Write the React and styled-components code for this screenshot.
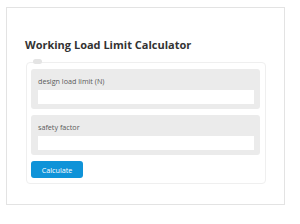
import React from 'react';
import styled, { createGlobalStyle } from 'styled-components';

const GlobalStyle = createGlobalStyle`
body {
	margin: 0;
	background: #fff;
	font-family: 'Open Sans', 'Liberation Sans', sans-serif;
}
`;

const Page = styled.div`
box-sizing: border-box;
width: 279px;
height: 198px;
margin: 7px 0 0 6px;
padding: 29px 18px 0 19px;
border: 1px solid #e3e3e3;
`;

const Title = styled.h1`
margin: 0 0 9px -1px;
font-size: 11px;
line-height: 16px;
font-weight: 700;
color: #333;
`;

const Card = styled.form`
position: relative;
display: flex;
flex-flow: column nowrap;
gap: 6px;
padding: 6px 5px 5px 4px;
border: 1px solid #efefef;
border-radius: 4px;
`;

const Legend = styled.span`
position: absolute;
left: 6px;
top: -4px;
width: 9px;
height: 5px;
border-radius: 3px;
background: #e4e4e4;
`;

const Field = styled.div`
display: flex;
flex-flow: column nowrap;
padding: 7px 6px 5px 7px;
background: #ebebeb;
border-radius: 3px;
`;

const Label = styled.label`
font-size: 7.2px;
line-height: 10px;
color: #5a5a5a;
margin-bottom: 4px;
`;

const Input = styled.input`
box-sizing: border-box;
height: 14px;
border: none;
outline: none;
background: #fff;
padding: 0 4px;
font-size: 7px;
`;

const Button = styled.button`
align-self: flex-start;
width: 52px;
height: 17px;
padding: 0;
border: none;
border-radius: 3px;
background: #0f93d8;
color: #fff;
font-family: 'Open Sans', 'Liberation Sans', sans-serif;
font-size: 7.2px;
`;

export default function App() {
	return (
		<>
		<GlobalStyle />
		<Page>
			<Title>Working Load Limit Calculator</Title>
			<Card onSubmit={(e) => e.preventDefault()}>
				<Legend />
				<Field>
					<Label>design load limit (N)</Label>
					<Input type="text" />
				</Field>
				<Field>
					<Label>safety factor</Label>
					<Input type="text" />
				</Field>
				<Button type="submit">Calculate</Button>
			</Card>
		</Page>
		</>
	);
}
